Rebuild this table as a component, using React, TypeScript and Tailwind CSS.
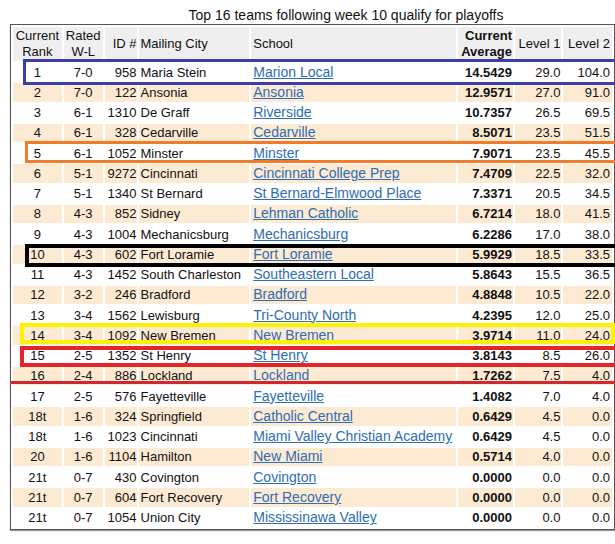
type Team = {
  rank: string;
  wl: string;
  id: string;
  city: string;
  school: string;
  avg: string;
  l1: string;
  l2: string;
};

const teams: Team[] = [
  { rank: "1", wl: "7-0", id: "958", city: "Maria Stein", school: "Marion Local", avg: "14.5429", l1: "29.0", l2: "104.0" },
  { rank: "2", wl: "7-0", id: "122", city: "Ansonia", school: "Ansonia", avg: "12.9571", l1: "27.0", l2: "91.0" },
  { rank: "3", wl: "6-1", id: "1310", city: "De Graff", school: "Riverside", avg: "10.7357", l1: "26.5", l2: "69.5" },
  { rank: "4", wl: "6-1", id: "328", city: "Cedarville", school: "Cedarville", avg: "8.5071", l1: "23.5", l2: "51.5" },
  { rank: "5", wl: "6-1", id: "1052", city: "Minster", school: "Minster", avg: "7.9071", l1: "23.5", l2: "45.5" },
  { rank: "6", wl: "5-1", id: "9272", city: "Cincinnati", school: "Cincinnati College Prep", avg: "7.4709", l1: "22.5", l2: "32.0" },
  { rank: "7", wl: "5-1", id: "1340", city: "St Bernard", school: "St Bernard-Elmwood Place", avg: "7.3371", l1: "20.5", l2: "34.5" },
  { rank: "8", wl: "4-3", id: "852", city: "Sidney", school: "Lehman Catholic", avg: "6.7214", l1: "18.0", l2: "41.5" },
  { rank: "9", wl: "4-3", id: "1004", city: "Mechanicsburg", school: "Mechanicsburg", avg: "6.2286", l1: "17.0", l2: "38.0" },
  { rank: "10", wl: "4-3", id: "602", city: "Fort Loramie", school: "Fort Loramie", avg: "5.9929", l1: "18.5", l2: "33.5" },
  { rank: "11", wl: "4-3", id: "1452", city: "South Charleston", school: "Southeastern Local", avg: "5.8643", l1: "15.5", l2: "36.5" },
  { rank: "12", wl: "3-2", id: "246", city: "Bradford", school: "Bradford", avg: "4.8848", l1: "10.5", l2: "22.0" },
  { rank: "13", wl: "3-4", id: "1562", city: "Lewisburg", school: "Tri-County North", avg: "4.2395", l1: "12.0", l2: "25.0" },
  { rank: "14", wl: "3-4", id: "1092", city: "New Bremen", school: "New Bremen", avg: "3.9714", l1: "11.0", l2: "24.0" },
  { rank: "15", wl: "2-5", id: "1352", city: "St Henry", school: "St Henry", avg: "3.8143", l1: "8.5", l2: "26.0" },
  { rank: "16", wl: "2-4", id: "886", city: "Lockland", school: "Lockland", avg: "1.7262", l1: "7.5", l2: "4.0" },
  { rank: "17", wl: "2-5", id: "576", city: "Fayetteville", school: "Fayetteville", avg: "1.4082", l1: "7.0", l2: "4.0" },
  { rank: "18t", wl: "1-6", id: "324", city: "Springfield", school: "Catholic Central", avg: "0.6429", l1: "4.5", l2: "0.0" },
  { rank: "18t", wl: "1-6", id: "1023", city: "Cincinnati", school: "Miami Valley Christian Academy", avg: "0.6429", l1: "4.5", l2: "0.0" },
  { rank: "20", wl: "1-6", id: "1104", city: "Hamilton", school: "New Miami", avg: "0.5714", l1: "4.0", l2: "0.0" },
  { rank: "21t", wl: "0-7", id: "430", city: "Covington", school: "Covington", avg: "0.0000", l1: "0.0", l2: "0.0" },
  { rank: "21t", wl: "0-7", id: "604", city: "Fort Recovery", school: "Fort Recovery", avg: "0.0000", l1: "0.0", l2: "0.0" },
  { rank: "21t", wl: "0-7", id: "1054", city: "Union City", school: "Mississinawa Valley", avg: "0.0000", l1: "0.0", l2: "0.0" },
];

export default function App() {
  return (
    <div className="relative w-[615px] h-[544px] overflow-hidden bg-white text-[13px] text-[#111] font-['Liberation_Sans',Arial,sans-serif]">
      {/* Title */}
      <div className="ml-[10px] w-[672px] h-[24px] pt-[8px] text-[14px] leading-[15px] text-center">
        Top 16 teams following week 10 qualify for playoffs
      </div>

      {/* Standings table */}
      <table className="ml-[10px] table-fixed border-separate border-spacing-[2px] border border-[#555] shadow-[0_1px_1px_#999]">
        <colgroup>
          <col className="w-[49px]" />
          <col className="w-[39px]" />
          <col className="w-[32px]" />
          <col className="w-[111px]" />
          <col className="w-[205px]" />
          <col className="w-[55px]" />
          <col className="w-[47px]" />
          <col className="w-[49px]" />
        </colgroup>
        <thead>
          <tr className="bg-[#efefef] leading-[16px]">
            <th className="h-[34px] p-0 font-normal text-center">Current<br />Rank</th>
            <th className="h-[34px] p-0 font-normal text-center">Rated<br />W-L</th>
            <th className="h-[34px] p-0 font-normal text-right">ID #</th>
            <th className="h-[34px] p-0 pl-[2px] font-normal text-left">Mailing City</th>
            <th className="h-[34px] p-0 pl-[2px] font-normal text-left">School</th>
            <th className="h-[34px] p-0 pr-[1px] font-bold text-right">Current<br />Average</th>
            <th className="h-[34px] p-0 pr-[1px] font-normal text-right">Level 1</th>
            <th className="h-[34px] p-0 pr-[2px] font-normal text-right">Level 2</th>
          </tr>
        </thead>
        <tbody>
          {teams.map((t, i) => (
            <tr key={i} className={`leading-[15px] ${i % 2 === 1 ? "bg-[#fdead2]" : "bg-white"}`}>
              <td className="h-[18.25px] p-0 text-center">{t.rank}</td>
              <td className="h-[18.25px] p-0 text-center">{t.wl}</td>
              <td className="h-[18.25px] p-0 text-right">{t.id}</td>
              <td className="h-[18.25px] p-0 pl-[2px] whitespace-nowrap">{t.city}</td>
              <td className="h-[18.25px] p-0 pl-[2px] whitespace-nowrap text-[14px]">
                <a href="#" className="text-[#2f6db4] underline">{t.school}</a>
              </td>
              <td className="h-[18.25px] p-0 pr-[1px] text-right font-bold">{t.avg}</td>
              <td className="h-[18.25px] p-0 pr-[1px] text-right">{t.l1}</td>
              <td className="h-[18.25px] p-0 pr-[2px] text-right">{t.l2}</td>
            </tr>
          ))}
        </tbody>
      </table>

      {/* Hand-drawn highlight boxes over the table */}
      <div className="absolute left-[23px] top-[59px] w-[620px] h-[26px] border-[3px] border-[#3b3db0]" />
      <div className="absolute left-[25px] top-[141px] w-[620px] h-[22px] border-[3px] border-[#f37b28]" />
      <div className="absolute left-[25px] top-[244px] w-[620px] h-[23px] border-[4px] border-black" />
      <div className="absolute left-[20px] top-[323px] w-[595px] h-[21px] border-[4px] border-[#fff200]" />
      <div className="absolute left-[20px] top-[346px] w-[620px] h-[21px] border-[4px] border-[#e5252a]" />
      <div className="absolute left-[10px] top-[381px] w-[605px] h-[3px] bg-[#d0282e]" />
    </div>
  );
}
